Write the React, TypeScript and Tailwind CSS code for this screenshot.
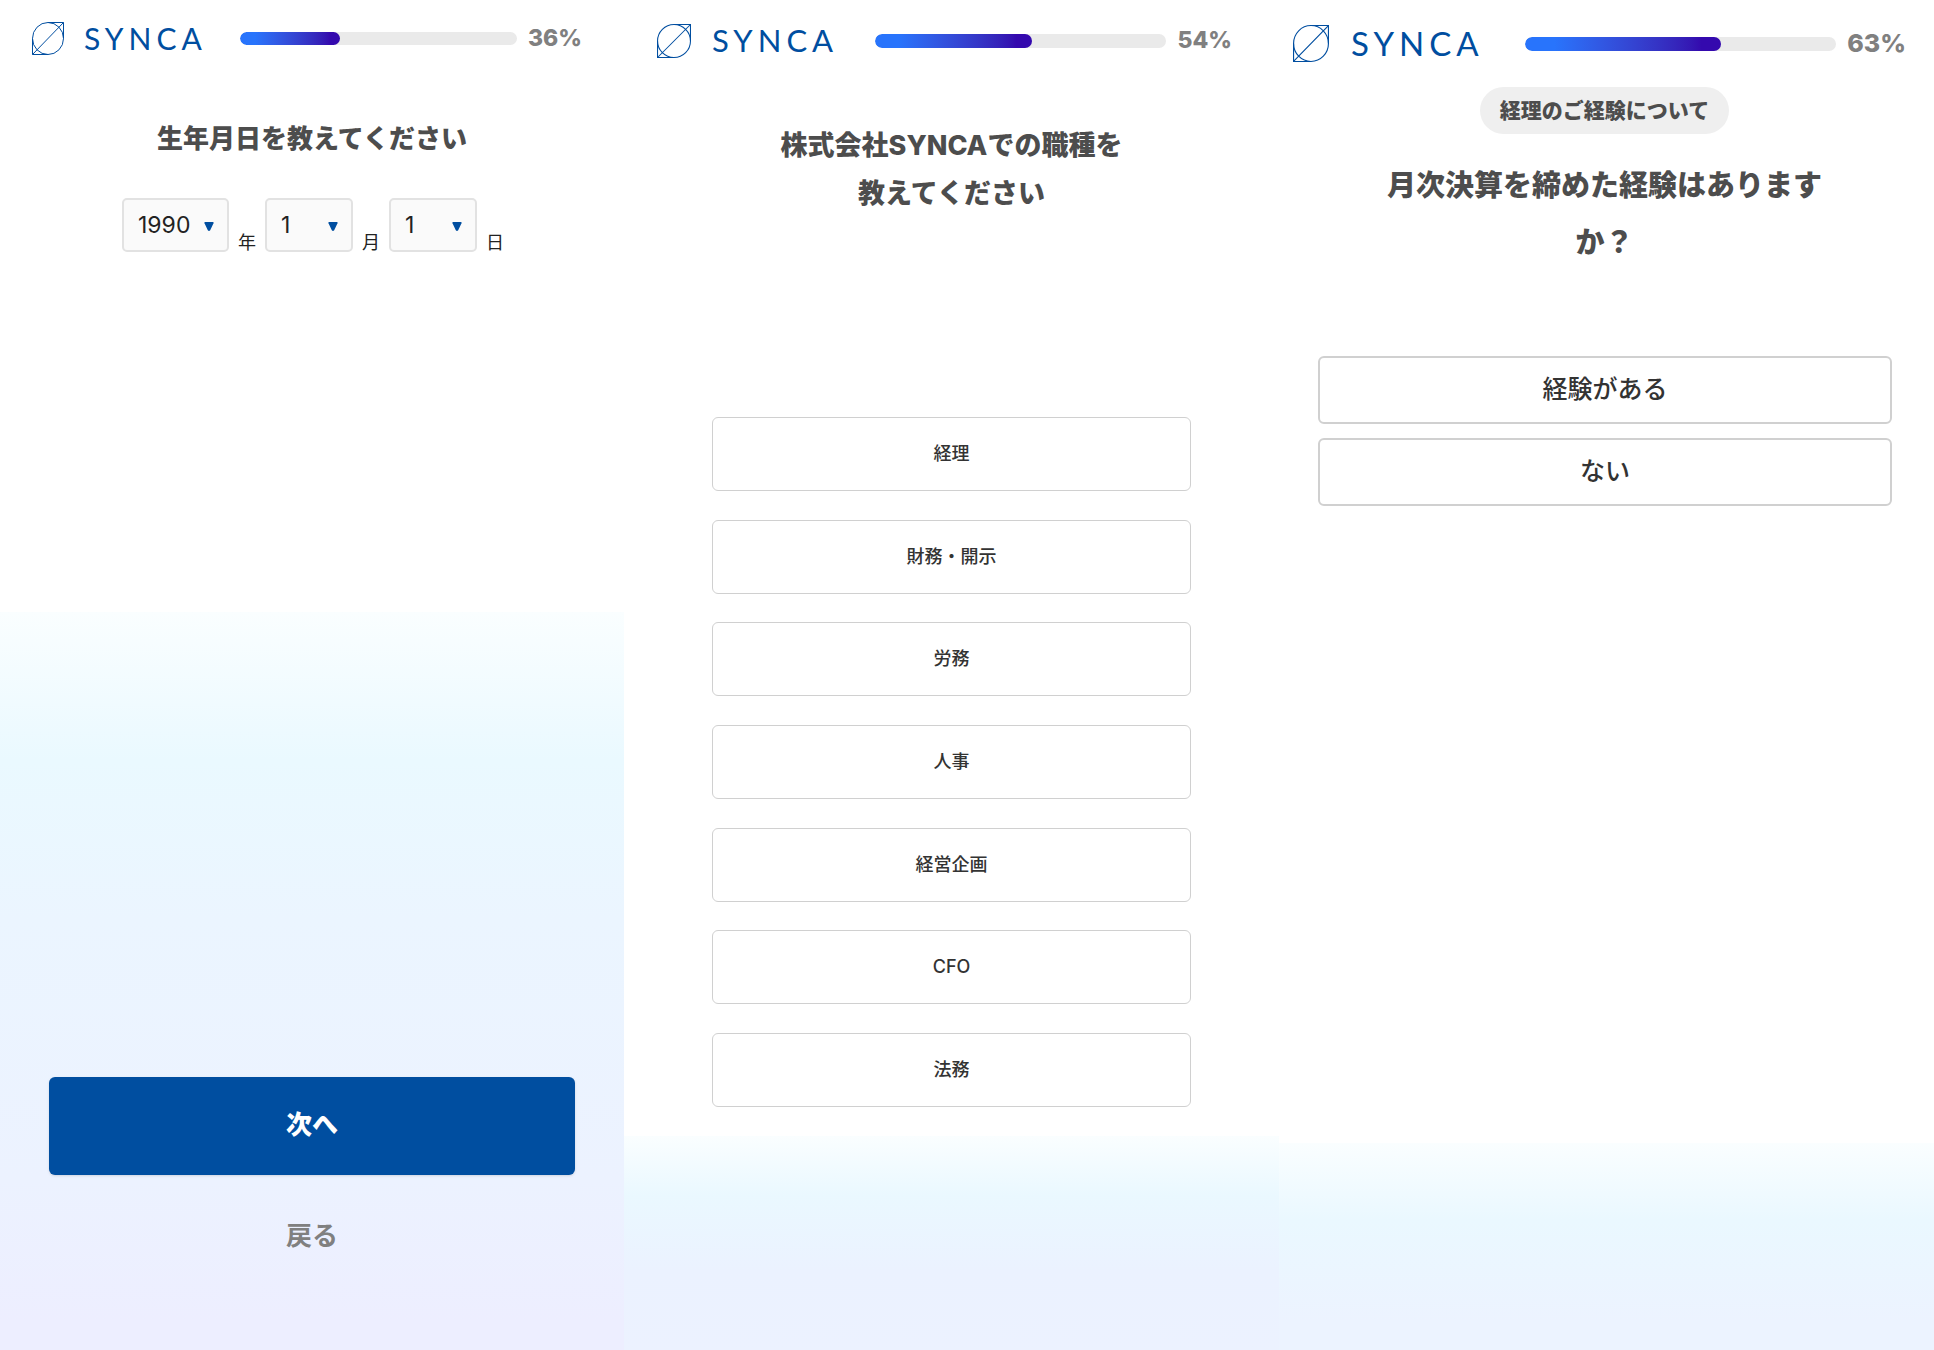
import type { ReactNode } from "react";

const years = ["1988", "1989", "1990", "1991", "1992"];
const months = Array.from({ length: 12 }, (_, i) => String(i + 1));
const days = Array.from({ length: 31 }, (_, i) => String(i + 1));

const jobs = ["経理", "財務・開示", "労務", "人事", "経営企画", "CFO", "法務"];

export default function App() {
  return (
    <div className="grid min-h-screen grid-cols-[624fr_655fr_655fr] bg-white font-['Inter','Noto_Sans_CJK_JP',sans-serif] text-[#4d4d4d]">
      <BirthdayStep />
      <JobStep />
      <ExperienceStep />
    </div>
  );
}

function BirthdayStep() {
  return (
    <section className="flex flex-col bg-[linear-gradient(to_bottom,#fff_612px,#fafeff_612px,#eaf9ff_760px,#ebf5ff_920px,#ecf2ff_1180px,#edeeff_1320px)]">
      <header className="flex h-[76px] items-center pl-8 pr-[42px]">
        <Logo className="h-[33px] w-8" />
        <Wordmark className="ml-5 w-[156px] text-[30px]" />
        <Progress value={36} className="h-[13px]" />
        <Percent value={36} className="text-[23px]" />
      </header>

      <h1 className="mt-[39px] text-center text-[26px] leading-[48px] font-extrabold">生年月日を教えてください</h1>

      <div className="mt-[35px] flex items-end justify-center gap-[9px] pl-[2px] text-lg leading-[18px] text-[#222]">
        <DateSelect label="年" options={years} value="1990" className="w-[107px]" />
        <DateSelect label="月" options={months} value="1" className="w-[88px]" />
        <DateSelect label="日" options={days} value="1" className="w-[88px]" />
      </div>

      <div className="mt-auto flex flex-col items-center px-[49px] pb-[90px]">
        <button type="button" className="h-[98px] w-full rounded-md bg-[#004ea0] pb-1 text-[26px] font-extrabold text-white shadow-sm">
          次へ
        </button>
        <button type="button" className="mt-[37px] text-[26px] leading-[48px] font-bold text-[#808080]">
          戻る
        </button>
      </div>
    </section>
  );
}

function JobStep() {
  return (
    <section className="bg-[linear-gradient(to_bottom,#fff_1136px,#fafeff_1136px,#eaf8ff_1196px,#ebf2ff_1270px,#ecf2ff_1350px)]">
      <header className="flex h-[81px] items-center pl-[33px] pr-[47px]">
        <Logo className="h-[34px] w-[34px]" />
        <Wordmark className="ml-[21px] w-[163px] text-[31px]" />
        <Progress value={54} className="h-[14px]" />
        <Percent value={54} className="text-[23px]" />
      </header>

      <h1 className="mt-[41px] text-center text-[27px] leading-[48px] font-extrabold">
        株式会社SYNCAでの職種を
        <br />
        教えてください
      </h1>

      <div className="mt-[199px] flex h-[690px] flex-col justify-between px-[88px]">
        {jobs.map((job) => (
          <Option key={job} className="h-[74px] text-lg">{job}</Option>
        ))}
      </div>
    </section>
  );
}

function ExperienceStep() {
  return (
    <section className="bg-[linear-gradient(to_bottom,#fff_1143px,#fafeff_1143px,#eaf8ff_1220px,#ecf3ff_1320px)]">
      <header className="flex h-[87px] items-center pl-[14px] pr-7">
        <Logo className="h-[37px] w-9" />
        <Wordmark className="ml-[22px] w-[174px] text-[33px]" />
        <Progress value={63} className="h-[14px]" />
        <Percent value={63} className="text-[25px]" />
      </header>

      <div className="flex justify-center pr-1">
        <span className="rounded-full bg-[#efefef] px-5 text-[21px] leading-[47px] font-extrabold">経理のご経験について</span>
      </div>

      <h1 className="mt-[23px] pr-[111px] pl-[107px] text-center text-[29px] leading-[57px] font-extrabold">
        月次決算を締めた経験はありますか？
      </h1>

      <div className="mt-[85px] flex flex-col gap-[14px] pl-[39px] pr-[42px]">
        <Option className="h-[68px] border-2 text-[25px]">経験がある</Option>
        <Option className="h-[68px] border-2 text-[25px]">ない</Option>
      </div>
    </section>
  );
}

function Logo({ className }: { className: string }) {
  return (
    <svg viewBox="0 0 32 33" preserveAspectRatio="none" className={`shrink-0 ${className}`} fill="none" stroke="#004ea0" aria-hidden="true">
      <path d="M.5 32.500V16.500a15.500 16 0 0 1 15.500-16h15.500v16a15.500 16 0 0 1-15.500 16Z" />
      <path d="M.5 16.500a15.500 16 0 0 0 15.500 16M31.500 16.500a15.500 16 0 0 0-15.500-16M.5 32.500l31-32" />
    </svg>
  );
}

function Wordmark({ className }: { className: string }) {
  return <span className={`shrink-0 font-['Lato',sans-serif] tracking-[5px] text-[#004ea0] ${className}`}>SYNCA</span>;
}

function Progress({ value, className }: { value: number; className: string }) {
  return (
    <div
      role="progressbar"
      aria-label="進捗"
      aria-valuenow={value}
      className={`flex-1 overflow-hidden rounded-full bg-[#eaeaea] ${className}`}
    >
      <div className="h-full rounded-full bg-linear-to-r from-[#2874fc] from-15% to-[#3409ae] to-90%" style={{ width: `${value}%` }} />
    </div>
  );
}

function Percent({ value, className }: { value: number; className: string }) {
  return <span className={`ml-[11px] font-extrabold text-[#808080] ${className}`}>{value}%</span>;
}

function DateSelect({ label, options, value, className }: { label: string; options: string[]; value: string; className: string }) {
  return (
    <label className="flex items-end gap-[9px]">
      <span className="relative">
        <select
          defaultValue={value}
          className={`h-[54px] appearance-none rounded-[5px] border-2 border-[#e2e2e2] bg-[#fafafa] pl-[14px] text-[23px] text-[#222] ${className}`}
        >
          {options.map((option) => (
            <option key={option}>{option}</option>
          ))}
        </select>
        <svg viewBox="0 0 10 9" className="pointer-events-none absolute top-6 right-[15px] h-[9px] w-[10px]" fill="#004ea0" aria-hidden="true">
          <path d="M1.200 0h7.600q1.200 0 .7 1.200L6.200 8.200Q5 9.600 3.800 8.200L.5 1.200Q0 0 1.200 0Z" />
        </svg>
      </span>
      {label}
    </label>
  );
}

function Option({ children, className }: { children: ReactNode; className: string }) {
  return (
    <button type="button" className={`w-full rounded-md border border-[#d0d0d0] bg-white font-medium text-[#333] ${className}`}>
      {children}
    </button>
  );
}
